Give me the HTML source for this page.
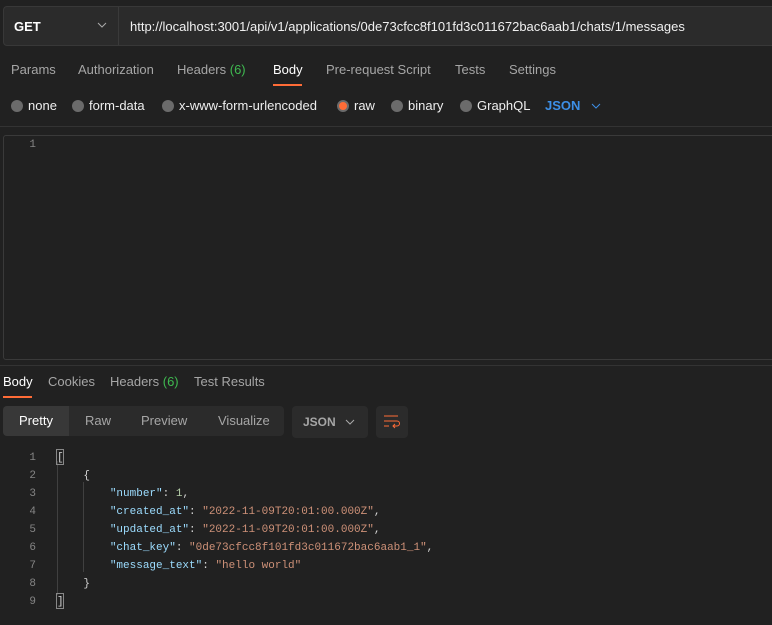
<!DOCTYPE html>
<html><head><style>
*{margin:0;padding:0;box-sizing:border-box}
body{width:772px;height:625px;background:#212121;font-family:"Liberation Sans",sans-serif;color:#a6a6a6;font-size:13px;position:relative;overflow:hidden}
.a{position:absolute;white-space:nowrap}
.mono{font-family:"Liberation Mono",monospace;font-size:11px}
.dot{position:absolute;width:12px;height:12px;border-radius:50%;background:#6b6b6b;top:100px}
.ln{position:absolute;width:30px;text-align:right;color:#858585}
</style></head><body>
<div class="a" style="left:3px;top:6px;width:780px;height:40px;background:#2b2b2b;border:1px solid #383838;border-radius:4px"></div>
<div class="a" style="left:118px;top:7px;width:1px;height:38px;background:#3a3a3a"></div>
<div class="a" style="left:14px;top:19px;color:#fff;font-weight:bold;font-size:13px">GET</div>
<svg class="a" style="left:97px;top:22px" width="10" height="6"><path d="M1 1l4 4 4-4" stroke="#aaa" fill="none"/></svg>
<div class="a" style="left:130px;top:19px;color:#f0f0f0;font-size:13px">http://localhost:3001/api/v1/applications/0de73cfcc8f101fd3c011672bac6aab1/chats/1/messages</div>

<div class="a" style="left:11px;top:62px">Params</div>
<div class="a" style="left:78px;top:62px">Authorization</div>
<div class="a" style="left:177px;top:62px">Headers <span style="color:#3fb950">(6)</span></div>
<div class="a" style="left:273px;top:62px;color:#fff">Body</div>
<div class="a" style="left:273px;top:84px;width:29px;height:2px;background:#ff6c37"></div>
<div class="a" style="left:326px;top:62px">Pre-request Script</div>
<div class="a" style="left:455px;top:62px">Tests</div>
<div class="a" style="left:509px;top:62px">Settings</div>

<div class="dot" style="left:11px"></div><div class="a" style="left:28px;top:98px;color:#eee">none</div>
<div class="dot" style="left:72px"></div><div class="a" style="left:89px;top:98px;color:#eee">form-data</div>
<div class="dot" style="left:162px"></div><div class="a" style="left:179px;top:98px;color:#eee">x-www-form-urlencoded</div>
<div class="dot" style="left:337px;background:#ff6c37;border:2px solid #6b6b6b"></div><div class="a" style="left:354px;top:98px;color:#eee">raw</div>
<div class="dot" style="left:391px"></div><div class="a" style="left:408px;top:98px;color:#eee">binary</div>
<div class="dot" style="left:460px"></div><div class="a" style="left:477px;top:98px;color:#eee">GraphQL</div>
<div class="a" style="left:545px;top:98px;color:#3d8fe6;font-weight:bold">JSON</div>
<svg class="a" style="left:591px;top:103px" width="10" height="6"><path d="M1 1l4 4 4-4" stroke="#3d8fe6" fill="none"/></svg>

<div class="a" style="left:0;top:126px;width:772px;height:1px;background:#333"></div>
<div class="a" style="left:3px;top:135px;width:780px;height:225px;border:1px solid #3a3a3a;border-radius:3px"></div>
<div class="ln mono" style="left:6px;top:139px">1</div>
<div class="a" style="left:0;top:365px;width:772px;height:1px;background:#333"></div>

<div class="a" style="left:3px;top:374px;color:#fff">Body</div>
<div class="a" style="left:3px;top:396px;width:29px;height:2px;background:#ff6c37"></div>
<div class="a" style="left:48px;top:374px">Cookies</div>
<div class="a" style="left:110px;top:374px">Headers <span style="color:#3fb950">(6)</span></div>
<div class="a" style="left:194px;top:374px">Test Results</div>

<div class="a" style="left:3px;top:406px;width:281px;height:30px;background:#2b2b2b;border-radius:4px"></div>
<div class="a" style="left:3px;top:406px;width:66px;height:30px;background:#383838;border-radius:4px 0 0 4px"></div>
<div class="a" style="left:19px;top:413px;color:#fff">Pretty</div>
<div class="a" style="left:85px;top:413px">Raw</div>
<div class="a" style="left:141px;top:413px">Preview</div>
<div class="a" style="left:218px;top:413px">Visualize</div>
<div class="a" style="left:292px;top:406px;width:76px;height:32px;background:#2b2b2b;border-radius:4px"></div>
<div class="a" style="left:303px;top:415px;font-weight:bold;font-size:12px">JSON</div>
<svg class="a" style="left:345px;top:419px" width="10" height="6"><path d="M1 1l4 4 4-4" stroke="#aaa" fill="none"/></svg>
<div class="a" style="left:376px;top:406px;width:32px;height:32px;background:#2b2b2b;border-radius:4px"></div>
<svg class="a" style="left:384px;top:415px" width="16" height="14"><path d="M0 1h14M0 6h13a2.5 2.5 0 0 1 0 5H9M11 9l-2 2 2 2M0 11h5" stroke="#ff6c37" fill="none" stroke-width="1"/></svg>

<div class="mono" style="position:absolute;left:0;top:449px;line-height:18px">
<div class="ln" style="left:6px;top:0">1</div><div class="ln" style="left:6px;top:18px">2</div><div class="ln" style="left:6px;top:36px">3</div><div class="ln" style="left:6px;top:54px">4</div><div class="ln" style="left:6px;top:72px">5</div><div class="ln" style="left:6px;top:90px">6</div><div class="ln" style="left:6px;top:108px">7</div><div class="ln" style="left:6px;top:126px">8</div><div class="ln" style="left:6px;top:144px">9</div>
</div>
<div class="a" style="left:57px;top:461px;width:1px;height:134px;background:#404040"></div>
<div class="a" style="left:83px;top:482px;width:1px;height:90px;background:#404040"></div>
<div class="a" style="left:56px;top:449px;width:8px;height:16px;border:1px solid #888"></div>
<div class="a" style="left:56px;top:593px;width:8px;height:16px;border:1px solid #888"></div>
<div class="mono a" style="left:57px;top:449px;line-height:18px;color:#d4d4d4;white-space:pre">[
    {
        <span style="color:#9cdcfe">"number"</span>: <span style="color:#b5cea8">1</span>,
        <span style="color:#9cdcfe">"created_at"</span>: <span style="color:#ce9178">"2022-11-09T20:01:00.000Z"</span>,
        <span style="color:#9cdcfe">"updated_at"</span>: <span style="color:#ce9178">"2022-11-09T20:01:00.000Z"</span>,
        <span style="color:#9cdcfe">"chat_key"</span>: <span style="color:#ce9178">"0de73cfcc8f101fd3c011672bac6aab1_1"</span>,
        <span style="color:#9cdcfe">"message_text"</span>: <span style="color:#ce9178">"hello world"</span>
    }
]</div>
</body></html>
